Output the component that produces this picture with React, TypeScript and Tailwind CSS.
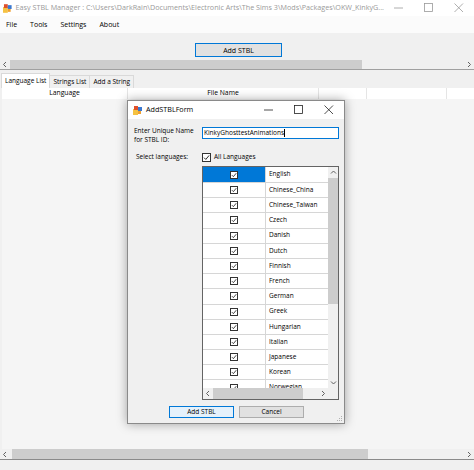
import type { ReactNode } from "react";

const languages = [
  "English",
  "Chinese_China",
  "Chinese_Taiwan",
  "Czech",
  "Danish",
  "Dutch",
  "Finnish",
  "French",
  "German",
  "Greek",
  "Hungarian",
  "Italian",
  "Japanese",
  "Korean",
  "Norwegian",
];

function AppIcon() {
  return (
    <svg width="9" height="9" viewBox="0 0 9 9">
      <rect x="0" y="3" width="5" height="6" fill="#f5c242" />
      <rect x="1" y="0" width="4" height="4" fill="#e0502a" />
      <rect x="5" y="1" width="4" height="4" fill="#3a78d0" />
      <rect x="5" y="5" width="3" height="3" fill="#f0a030" />
    </svg>
  );
}

function Caption({ color }: { color: string }) {
  return (
    <div className="flex items-center">
      <svg width="30" height="10" viewBox="0 0 30 10">
        <line x1="10" y1="5" x2="19" y2="5" stroke={color} strokeWidth="0.8" />
      </svg>
      <svg width="30" height="10" viewBox="0 0 30 10">
        <rect x="10.5" y="0.5" width="8" height="8" fill="none" stroke={color} strokeWidth="0.8" />
      </svg>
      <svg width="30" height="10" viewBox="0 0 30 10">
        <path d="M10.5 0.5 L19 9 M19 0.5 L10.5 9" stroke={color} strokeWidth="0.8" />
      </svg>
    </div>
  );
}

function Chevron({ dir }: { dir: "l" | "r" | "u" | "d" }) {
  const d = {
    l: "M4 1 L1.5 3.5 L4 6",
    r: "M2 1 L4.5 3.5 L2 6",
    u: "M1 4.5 L3.5 2 L6 4.5",
    d: "M1 2.5 L3.5 5 L6 2.5",
  }[dir];
  return (
    <svg width="7" height="7" viewBox="0 0 7 7">
      <path d={d} fill="none" stroke="#606060" strokeWidth="1" />
    </svg>
  );
}

function Check({ size = 8 }: { size?: number }) {
  return (
    <div
      className="flex items-center justify-center border border-[#333] bg-white"
      style={{ width: size, height: size }}
    >
      <svg width={size - 2} height={size - 2} viewBox="0 0 8 8">
        <path d="M1.2 4.2 L3.2 6.2 L7 1.6" fill="none" stroke="#222" strokeWidth="1.1" />
      </svg>
    </div>
  );
}

function HScroll({ left, width, className }: { left: number; width: number; className?: string }) {
  return (
    <div className={`flex items-center bg-[#f0f0f0] ${className ?? ""}`}>
      <div className="w-[10px] flex justify-center">
        <Chevron dir="l" />
      </div>
      <div className="flex-1 h-full relative">
        <div className="absolute top-0 bottom-0 bg-[#cdcdcd]" style={{ left, width }} />
      </div>
      <div className="w-[10px] flex justify-center">
        <Chevron dir="r" />
      </div>
    </div>
  );
}

function Tab({ children, active }: { children: ReactNode; active?: boolean }) {
  return active ? (
    <div className="h-[15px] px-[3px] flex items-center bg-white border border-b-0 border-[#d9d9d9]">{children}</div>
  ) : (
    <div className="h-[13px] px-[3px] flex items-center bg-[#f0f0f0] border border-b-0 border-l-0 border-[#d9d9d9]">
      {children}
    </div>
  );
}

function AddStblForm() {
  return (
    <div className="absolute left-[127px] top-[100px] w-[218px] h-[324px] bg-[#f0f0f0] border border-[#8a8a8a] shadow-[0_0_10px_rgba(0,0,0,0.35)] flex flex-col">
      {/* title bar */}
      <div className="h-[18px] bg-white flex items-center pl-[5px]">
        <AppIcon />
        <span className="ml-[4px] text-[7.2px]">AddSTBLForm</span>
        <div className="ml-auto">
          <Caption color="#222" />
        </div>
      </div>

      {/* body */}
      <div className="flex-1 relative pl-[6px] pr-[5px]">
        <div className="flex mt-[8px]">
          <div className="w-[68px] leading-[8.5px]">
            Enter Unique Name
            <br />
            for STBL ID:
          </div>
          <div className="w-[137px] h-[12px] bg-white border border-[#0078d7] flex items-center pl-[1px]">
            KinkyGhosttestAnimations
            <span className="w-px h-[8px] bg-black" />
          </div>
        </div>

        <div className="flex items-center mt-[9px]">
          <div className="w-[68px] pl-[2px]">Select languages:</div>
          <Check size={9} />
          <span className="ml-[3px]">All Languages</span>
        </div>

        {/* grid */}
        <div className="ml-[68px] mt-[4px] w-[137px] h-[234px] border border-[#646464] bg-white flex flex-col">
          <div className="flex h-[221px]">
            <div className="w-[125px] overflow-hidden">
              {languages.map((lang, i) => (
                <div
                  key={lang}
                  className={`flex border-b border-[#d6d6d6] ${i === 0 ? "h-[16px]" : "h-[15.2px]"} shrink-0`}
                >
                  <div
                    className={`w-[63px] flex items-center justify-center border-r border-[#d6d6d6] ${
                      i === 0 ? "bg-[#0078d7]" : ""
                    }`}
                  >
                    <Check />
                  </div>
                  <div className="flex-1 flex items-center pl-[3px]">{lang}</div>
                </div>
              ))}
            </div>
            <div className="w-[10px] bg-[#f0f0f0] flex flex-col items-center">
              <div className="h-[11px] flex items-center">
                <Chevron dir="u" />
              </div>
              <div className="w-full h-[126px] bg-[#cdcdcd]" />
              <div className="flex-1" />
              <div className="h-[11px] flex items-center">
                <Chevron dir="d" />
              </div>
            </div>
          </div>
          <div className="flex flex-1">
            <HScroll left={0} width={90} className="w-[125px] h-full" />
            <div className="w-[10px] bg-[#f0f0f0]" />
          </div>
        </div>

        {/* buttons */}
        <div className="flex mt-[6px] ml-[35px] gap-[5px]">
          <div className="w-[65px] h-[12px] flex items-center justify-center bg-[#e5f1fb] border border-[#0078d7]">
            Add STBL
          </div>
          <div className="w-[65px] h-[12px] flex items-center justify-center bg-[#e1e1e1] border border-[#adadad]">
            Cancel
          </div>
        </div>

        {/* resize grip */}
        <svg className="absolute right-[1px] bottom-[1px]" width="6" height="6" viewBox="0 0 6 6">
          <rect x="4" y="0" width="1" height="1" fill="#b0b0b0" />
          <rect x="2" y="2" width="1" height="1" fill="#b0b0b0" />
          <rect x="4" y="2" width="1" height="1" fill="#b0b0b0" />
          <rect x="0" y="4" width="1" height="1" fill="#b0b0b0" />
          <rect x="2" y="4" width="1" height="1" fill="#b0b0b0" />
          <rect x="4" y="4" width="1" height="1" fill="#b0b0b0" />
        </svg>
      </div>
    </div>
  );
}

export default function App() {
  return (
    <div className="relative w-[474px] h-[470px] overflow-hidden bg-[#f0f0f0] text-black text-[6.5px] font-['Open_Sans',sans-serif] leading-none">
      {/* title bar */}
      <div className="h-[16px] bg-white flex items-center pl-[3px]">
        <AppIcon />
        <span className="ml-[4px] text-[#9a9a9a] text-[7.2px] whitespace-nowrap">
          Easy STBL Manager : C:\Users\DarkRain\Documents\Electronic Arts\The Sims 3\Mods\Packages\OKW_KinkyG...
        </span>
        <div className="ml-auto">
          <Caption color="#9a9a9a" />
        </div>
      </div>

      {/* menu */}
      <div className="h-[17px] bg-[#fbfbfb] flex items-center pl-[6px] gap-[13px] text-[7px]">
        <span>File</span>
        <span>Tools</span>
        <span>Settings</span>
        <span>About</span>
      </div>

      {/* toolbar */}
      <div className="h-[27px] flex justify-center pt-[10px] pl-[3px]">
        <div className="w-[87px] h-[14px] bg-[#e1e1e1] border-[1.5px] border-[#0078d7] flex items-center justify-center text-[7px]">
          Add STBL
        </div>
      </div>

      <HScroll left={0} width={352} className="h-[9px]" />
      <div className="h-px bg-[#a0a0a0]" />

      {/* tabs */}
      <div className="h-[17px] flex items-end pl-[1px] mt-[1px]">
        <Tab active>Language List</Tab>
        <Tab>Strings List</Tab>
        <Tab>Add a String</Tab>
      </div>

      {/* list view */}
      <div className="h-[361px] ml-[2px] bg-[#f5f5f5] flex flex-col">
        <div className="h-[11px] bg-white flex text-[6.8px]">
          <div className="w-[126px] flex items-center justify-center border-r border-[#e5e5e5]">Language</div>
          <div className="w-[191px] flex items-center justify-center border-r border-[#e5e5e5]">File Name</div>
          <div className="w-[48px] border-r border-[#e5e5e5]" />
          <div className="w-[80px] border-r border-[#e5e5e5]" />
        </div>
      </div>

      <HScroll left={2} width={356} className="h-[10px]" />
      <div className="h-px bg-[#8a8a8a]" />

      <AddStblForm />
    </div>
  );
}
